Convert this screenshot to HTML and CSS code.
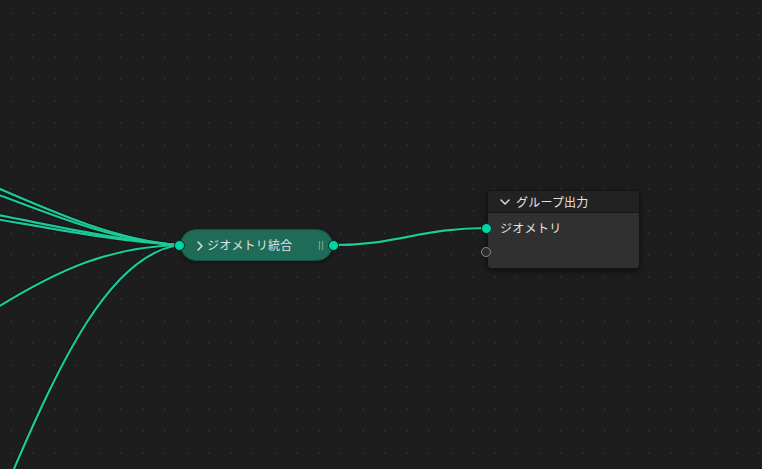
FILE: index.html
```html
<!DOCTYPE html>
<html lang="ja">
<head>
<meta charset="utf-8">
<link rel="stylesheet" href="styles.css">
</head>
<body>
<div class="canvas">
  <svg class="wires" width="762" height="469" viewBox="0 0 762 469">
    <g class="wire-under">
      <path d="M -30 176 C 40 206, 110 240, 179 245"/>
      <path d="M -30 184 C 40 210, 110 241, 179 245"/>
      <path d="M -40 208 C 40 222, 110 240, 179 245"/>
      <path d="M -40 213 C 40 226, 110 241, 179 245"/>
      <path d="M -10 312 C 60 268, 110 247, 179 245"/>
      <path d="M 5 490 C 60 360, 110 255, 179 245"/>
      <path d="M 333 245 C 400 245, 420 228, 486 228"/>
    </g>
    <g class="wire">
      <path d="M -30 176 C 40 206, 110 240, 179 245"/>
      <path d="M -30 184 C 40 210, 110 241, 179 245"/>
      <path d="M -40 208 C 40 222, 110 240, 179 245"/>
      <path d="M -40 213 C 40 226, 110 241, 179 245"/>
      <path d="M -10 312 C 60 268, 110 247, 179 245"/>
      <path d="M 5 490 C 60 360, 110 255, 179 245"/>
      <path d="M 333 245 C 400 245, 420 228, 486 228"/>
    </g>
  </svg>

  <div class="node-collapsed">
    <span class="socket socket-in"></span>
    <svg class="chev-right" width="8" height="10" viewBox="0 0 8 10"><polyline points="2,1 6,5 2,9"/></svg>
    <span class="label">ジオメトリ統合</span>
    <svg class="grip" width="6" height="9" viewBox="0 0 6 9"><line x1="1.5" y1="0" x2="1.5" y2="9"/><line x1="4.5" y1="0" x2="4.5" y2="9"/></svg>
    <span class="socket socket-out"></span>
  </div>

  <div class="node-box">
    <div class="node-header">
      <svg class="chev-down" width="10" height="8" viewBox="0 0 10 8"><polyline points="1,2 5,6 9,2"/></svg>
      <span class="label">グループ出力</span>
    </div>
    <div class="node-body">
      <div class="row">
        <span class="socket socket-left"></span>
        <span class="label">ジオメトリ</span>
      </div>
      <div class="row">
        <span class="socket socket-left socket-empty"></span>
      </div>
    </div>
  </div>
</div>
</body>
</html>
```

FILE: styles.css
```css
html, body {
  margin: 0;
  padding: 0;
  background: #1d1d1d;
}

.canvas {
  position: relative;
  width: 762px;
  height: 469px;
  overflow: hidden;
  background-color: #1d1d1d;
  background-image: radial-gradient(circle at center, #292929 0, #292929 1px, transparent 1.6px);
  background-size: 22px 22px;
  background-position: 0 2px;
  font-family: "Noto Sans CJK JP", "Noto Sans", sans-serif;
  color: #e2e2e2;
}

.wires {
  position: absolute;
  left: 0;
  top: 0;
}

.wire-under path {
  fill: none;
  stroke: rgba(10, 20, 16, 0.7);
  stroke-width: 4;
}

.wire path {
  fill: none;
  stroke: #1ec899;
  stroke-width: 2.2;
}

.socket {
  position: absolute;
  width: 9px;
  height: 9px;
  border-radius: 50%;
  background: #00d4a2;
  border: 1px solid #0e1a16;
  box-sizing: content-box;
}

/* collapsed node */
.node-collapsed {
  position: absolute;
  left: 180px;
  top: 229px;
  width: 153px;
  height: 32px;
  box-sizing: border-box;
  border-radius: 16px;
  background: #1e6b57;
  border: 1px solid #174f41;
  box-shadow: 0 1px 4px rgba(0, 0, 0, 0.45);
  display: flex;
  align-items: center;
  padding-left: 15px;
}

.node-collapsed .socket-in {
  left: -7px;
  top: 10px;
}

.node-collapsed .socket-out {
  right: -7px;
  top: 10px;
}

.chev-right {
  flex: none;
  margin-top: 1px;
}

.chev-right polyline,
.chev-down polyline {
  fill: none;
  stroke: #e6e6e6;
  stroke-width: 1.4;
  stroke-linecap: round;
  stroke-linejoin: round;
}

.node-collapsed .label {
  margin-left: 3px;
  font-size: 12px;
  line-height: 14px;
  letter-spacing: 0.2px;
  flex: 1;
}

.grip {
  flex: none;
  margin-right: 8px;
  margin-top: 1px;
}

.grip line {
  stroke: #6f9f90;
  stroke-width: 1.2;
}

/* group output node */
.node-box {
  position: absolute;
  left: 487px;
  top: 190px;
  width: 153px;
  height: 79px;
  box-sizing: border-box;
  border-radius: 4px;
  border: 1px solid #141414;
  background: #303030;
  box-shadow: 0 2px 6px rgba(0, 0, 0, 0.5);
}

.node-header {
  height: 22px;
  box-sizing: border-box;
  background: #222222;
  border-bottom: 1px solid #161616;
  border-radius: 3px 3px 0 0;
  display: flex;
  align-items: center;
  padding-left: 12px;
}

.node-header .label {
  margin-left: 6px;
  font-size: 12px;
  line-height: 14px;
  letter-spacing: 0.2px;
}

.chev-down {
  flex: none;
}

.node-body {
  position: relative;
  padding-top: 3px;
}

.row {
  position: relative;
  height: 24px;
  display: flex;
  align-items: center;
  padding-left: 12px;
}

.row .label {
  font-size: 12px;
  line-height: 14px;
  letter-spacing: 0.3px;
}

.socket-left {
  left: -7px;
  top: 7px;
}

.socket-empty {
  background: #2b2b2b;
  border: 1px solid #8a8a8a;
  width: 8px;
  height: 8px;
}
```
